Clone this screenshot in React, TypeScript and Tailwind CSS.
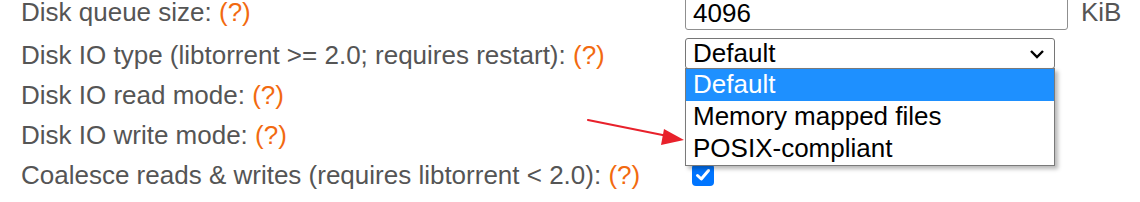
import React from "react";

const Hint = () => <span className="text-[#f26a10]">(?)</span>;

export default function App() {
  return (
    <div className="relative w-[1140px] h-[202px] overflow-hidden bg-white font-['Liberation_Sans',Arial,sans-serif] text-[26px] text-[#555555]">
      <div className="flex flex-col mt-[-8px]">
        {/* Row 1 */}
        <div className="flex items-center h-[40px]">
          <div className="w-[685px] shrink-0 pl-[21px] leading-[30px]">
            Disk queue size: <Hint />
          </div>
          <div className="mt-[2px] h-[34px] w-[383px] rounded-[3px] border border-[#8f8f8f] bg-white pl-[7px] leading-[32px] text-black">
            4096
          </div>
          <span className="ml-[13px] leading-[30px]">KiB</span>
        </div>
        {/* Row 2 */}
        <div className="flex items-center h-[40px] mt-[3px]">
          <div className="w-[685px] shrink-0 pl-[21px] leading-[30px]">
            Disk IO type (libtorrent &gt;= 2.0; requires restart): <Hint />
          </div>
          <div className="relative mb-[4px]">
            <div className="flex items-center justify-between h-[31px] w-[370px] rounded-[3px] border border-[#767676] bg-white pl-[7px] pr-[9px] leading-[29px] text-black">
              <span>Default</span>
              <svg width="16" height="10" viewBox="0 0 16 10" className="mt-[2px]">
                <path d="M2 2 L8 8 L14 2" fill="none" stroke="#000" strokeWidth="2.4" />
              </svg>
            </div>
            <div className="absolute left-0 top-[30px] z-10 w-[370px] border border-[#7a7a7a] bg-white text-black shadow-[3px_3px_4px_rgba(0,0,0,0.28)]">
              <div className="h-[32px] bg-[#1e90ff] pl-[7px] leading-[31px] text-white">Default</div>
              <div className="h-[32px] pl-[7px] leading-[31px]">Memory mapped files</div>
              <div className="h-[32px] pl-[7px] leading-[31px]">POSIX-compliant</div>
            </div>
          </div>
        </div>
        {/* Row 3 */}
        <div className="flex items-center h-[40px]">
          <div className="w-[685px] shrink-0 pl-[21px] leading-[30px]">
            Disk IO read mode: <Hint />
          </div>
          <div className="h-[31px] w-[300px] rounded-[3px] border border-[#767676] bg-white" />
        </div>
        {/* Row 4 */}
        <div className="flex items-center h-[40px]">
          <div className="w-[685px] shrink-0 pl-[21px] leading-[30px]">
            Disk IO write mode: <Hint />
          </div>
          <div className="h-[31px] w-[300px] rounded-[3px] border border-[#767676] bg-white" />
        </div>
        {/* Row 5 */}
        <div className="flex items-center h-[40px]">
          <div className="w-[685px] shrink-0 pl-[21px] leading-[30px]">
            Coalesce reads &amp; writes (requires libtorrent &lt; 2.0): <Hint />
          </div>
          <div className="ml-[7px] flex h-[22px] w-[22px] items-center justify-center rounded-[4px] bg-[#0075ff]">
            <svg width="16" height="14" viewBox="0 0 16 14">
              <path d="M2.5 7.5 L6.3 11 L13.5 2.5" fill="none" stroke="#fff" strokeWidth="3" strokeLinecap="round" strokeLinejoin="round" />
            </svg>
          </div>
        </div>
      </div>
      {/* Red annotation arrow */}
      <svg className="absolute left-0 top-0 z-20 pointer-events-none" width="1140" height="202" viewBox="0 0 1140 202">
        <line x1="588" y1="120" x2="670" y2="136.5" stroke="#e8212b" strokeWidth="2.2" strokeLinecap="round" />
        <polygon points="684,140 664,129 661,145" fill="#e8212b" />
      </svg>
    </div>
  );
}
